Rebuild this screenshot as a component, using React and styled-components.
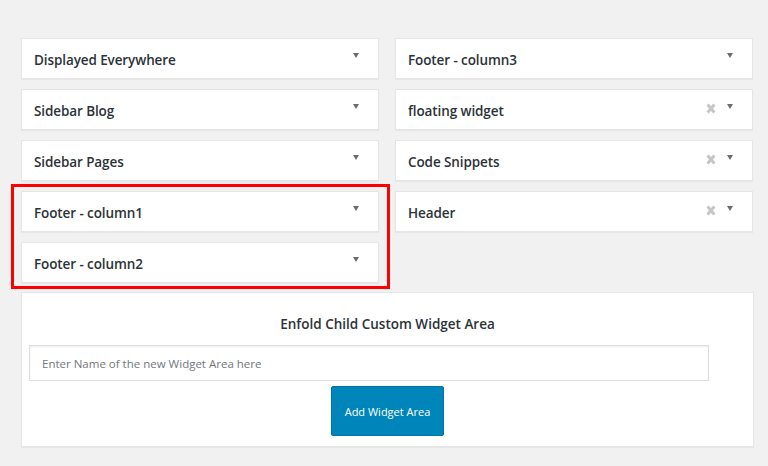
import React from "react";
import styled, { createGlobalStyle } from "styled-components";

const leftAreas = [
  { name: "Displayed Everywhere" },
  { name: "Sidebar Blog" },
  { name: "Sidebar Pages" },
];

const highlighted = [{ name: "Footer - column1" }, { name: "Footer - column2" }];

const rightAreas = [
  { name: "Footer - column3" },
  { name: "floating widget", removable: true },
  { name: "Code Snippets", removable: true },
  { name: "Header", removable: true },
];

function AreaCard({ name, removable }) {
  return (
    <Card>
      <CardTitle>{name}</CardTitle>
      <Controls>
        {removable && (
          <RemoveIcon viewBox="0 0 10 11" aria-hidden="true">
            <path d="M1.6 1.6 L8.4 9.4 M8.4 1.6 L1.6 9.4" />
          </RemoveIcon>
        )}
        <Arrow />
      </Controls>
    </Card>
  );
}

export default function App() {
  return (
    <>
      <GlobalStyle />
      <Page>
        <Columns>
          <Column>
            {leftAreas.map((a) => (
              <AreaCard key={a.name} {...a} />
            ))}
            <Highlight>
              {highlighted.map((a) => (
                <AreaCard key={a.name} {...a} />
              ))}
            </Highlight>
          </Column>
          <Column>
            {rightAreas.map((a) => (
              <AreaCard key={a.name} {...a} />
            ))}
          </Column>
        </Columns>

        <Panel>
          <PanelTitle>Enfold Child Custom Widget Area</PanelTitle>
          <NameInput placeholder="Enter Name of the new Widget Area here" />
          <AddButton type="button">Add Widget Area</AddButton>
        </Panel>
      </Page>
    </>
  );
}

const GlobalStyle = createGlobalStyle`
  html, body {
    margin: 0;
    padding: 0;
    background: #f1f1f1;
  }
  body {
    font-family: "Open Sans", "Noto Sans", "Liberation Sans", sans-serif;
    color: #23282d;
  }
  * {
    box-sizing: border-box;
  }
`;

const Page = styled.div`
  width: 768px;
  height: 466px;
  padding: 38px 14px 0 21px;
  overflow: hidden;
`;

const Columns = styled.div`
  display: grid;
  grid-template-columns: 358px 358px;
  column-gap: 16px;
  align-items: start;
`;

const Column = styled.div`
  display: flex;
  flex-direction: column;
  gap: 10px;
`;

const Highlight = styled.div`
  position: relative;
  display: flex;
  flex-direction: column;
  gap: 10px;

  &::after {
    content: "";
    position: absolute;
    top: -7px;
    left: -10px;
    right: -11px;
    bottom: -6px;
    border: 3px solid #ff0000;
    pointer-events: none;
  }
`;

const Card = styled.div`
  height: 41px;
  background: #fff;
  border: 1px solid #e5e5e5;
  box-shadow: 0 1px 1px rgba(0, 0, 0, 0.04);
  display: flex;
  align-items: flex-start;
  justify-content: space-between;
  padding: 0 19px 0 12px;
`;

const CardTitle = styled.h2`
  margin: 0;
  font-size: 13.5px;
  font-weight: 600;
  line-height: 20px;
  padding-top: 11px;
  color: #2c3338;
  letter-spacing: -0.1px;
`;

const Controls = styled.div`
  display: flex;
  align-items: flex-start;
  gap: 11px;
  padding-top: 13px;
`;

const RemoveIcon = styled.svg`
  width: 10px;
  height: 11px;
  fill: none;
  stroke: #c6c6c6;
  stroke-width: 3;
`;

const Arrow = styled.span`
  display: block;
  width: 0;
  height: 0;
  margin-top: 1px;
  border-left: 3.5px solid transparent;
  border-right: 3.5px solid transparent;
  border-top: 5px solid #666d75;
`;

const Panel = styled.div`
  margin-top: 9px;
  width: 733px;
  height: 155px;
  background: #fff;
  border: 1px solid #e5e5e5;
  box-shadow: 0 1px 1px rgba(0, 0, 0, 0.04);
  display: flex;
  flex-direction: column;
  align-items: center;
  padding-top: 21px;
`;

const PanelTitle = styled.h3`
  margin: 0 0 11px;
  font-size: 13.5px;
  font-weight: 600;
  line-height: 20px;
  color: #2c3338;
`;

const NameInput = styled.input`
  align-self: flex-start;
  margin-left: 7px;
  width: 680px;
  height: 36px;
  border: 1px solid #ddd;
  box-shadow: inset 0 1px 2px rgba(0, 0, 0, 0.07);
  padding: 0 12px;
  font-family: "Open Sans", "Noto Sans", sans-serif;
  font-size: 11.5px;
  color: #32373c;
  outline: none;

  &::placeholder {
    color: #72777c;
  }
`;

const AddButton = styled.button`
  margin-top: 5px;
  width: 113px;
  height: 50px;
  background: #0085ba;
  border: 1px solid #0073aa;
  border-radius: 2px;
  color: #fff;
  font-family: "Open Sans", "Noto Sans", sans-serif;
  font-size: 11px;
  cursor: pointer;
`;
